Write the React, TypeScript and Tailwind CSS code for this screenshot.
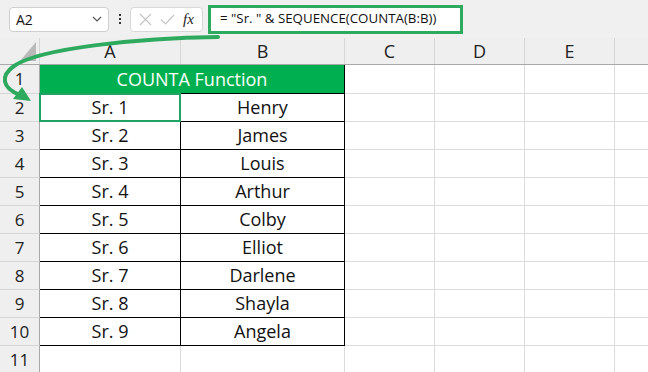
import React from "react";

const cols = [
  { k: "A", w: "w-[141px]" },
  { k: "B", w: "w-[164px]" },
  { k: "C", w: "w-[90px]" },
  { k: "D", w: "w-[90px]" },
  { k: "E", w: "w-[90px]" },
];

const rows = [
  ["Sr. 1", "Henry"],
  ["Sr. 2", "James"],
  ["Sr. 3", "Louis"],
  ["Sr. 4", "Arthur"],
  ["Sr. 5", "Colby"],
  ["Sr. 6", "Elliot"],
  ["Sr. 7", "Darlene"],
  ["Sr. 8", "Shayla"],
  ["Sr. 9", "Angela"],
];

function RowHead({ n }: { n: number }) {
  return (
    <div className="w-[40px] shrink-0 bg-[#efefef] border-r border-r-[#a8a8a8] border-b border-b-[#d6d6d6] flex items-center justify-center text-[17px] text-[#222]">
      {n}
    </div>
  );
}

function Blank({ w }: { w: string }) {
  return <div className={`${w} shrink-0 border-r border-b border-[#dcdcdc]`} />;
}

export default function App() {
  return (
    <div
      className="relative w-[648px] h-[372px] overflow-hidden bg-white text-[#111]"
      style={{ fontFamily: '"Open Sans", "Noto Sans", sans-serif' }}
    >
      {/* formula bar */}
      <div className="h-[38px] bg-[#f0f0f0] flex items-center">
        <div className="ml-[9px] w-[100px] h-[25px] bg-white border border-[#cfcfcf] rounded-[4px] flex items-center justify-between pl-[6px] pr-[6px]">
          <span className="text-[14px] text-[#111]">A2</span>
          <svg width="10" height="6" viewBox="0 0 10 6" fill="none" stroke="#555" strokeWidth="1.2">
            <path d="M1 1l4 4 4-4" />
          </svg>
        </div>
        <div className="w-[21px] flex flex-col items-center gap-[2px]">
          <span className="w-[2px] h-[2px] bg-[#333]" />
          <span className="w-[2px] h-[2px] bg-[#333]" />
          <span className="w-[2px] h-[2px] bg-[#333]" />
        </div>
        <div className="w-[73px] h-[25px] bg-white border border-[#d8d8d8] rounded-[4px] flex items-center pl-[8px] gap-[8px]">
          <svg width="13" height="13" viewBox="0 0 13 13" stroke="#c4c4c4" strokeWidth="1.2">
            <path d="M1 1l11 11M12 1L1 12" />
          </svg>
          <svg width="15" height="11" viewBox="0 0 15 11" fill="none" stroke="#c4c4c4" strokeWidth="1.2">
            <path d="M1 5.5l4.5 4.5L14 1" />
          </svg>
          <span className="text-[15px] italic text-[#222]" style={{ fontFamily: '"Liberation Serif", serif' }}>
            fx
          </span>
        </div>
        <div className="ml-[5px] w-[255px] h-[29px] border-[3px] border-[#2eaa5f] bg-white flex items-center pl-[9px]">
          <span className="text-[13.3px] text-[#111] whitespace-pre">= "Sr. " &amp; SEQUENCE(COUNTA(B:B))</span>
        </div>
      </div>

      {/* column headers */}
      <div className="flex h-[27px] bg-[#efefef] border-b border-[#a8a8a8]">
        <div className="w-[40px] shrink-0 border-r border-[#d6d6d6] relative">
          <svg className="absolute left-[20px] top-[4px]" width="16" height="19" viewBox="0 0 16 19">
            <path d="M16 0V19H0Z" fill="#b9b9b9" />
          </svg>
        </div>
        {cols.map((c) => (
          <div key={c.k} className={`${c.w} shrink-0 border-r border-[#d6d6d6] flex items-center justify-center text-[18px] text-[#222]`}>
            {c.k}
          </div>
        ))}
        <div className="flex-1" />
      </div>

      {/* row 1 */}
      <div className="flex h-[29px]">
        <RowHead n={1} />
        <div className="w-[305px] shrink-0 bg-[#00b050] border-r border-b border-black flex items-center justify-center text-white text-[18px]">
          COUNTA Function
        </div>
        {cols.slice(2).map((c) => (
          <Blank key={c.k} w={c.w} />
        ))}
        <div className="flex-1 border-b border-[#dcdcdc]" />
      </div>

      {rows.map((r, i) => (
        <div key={i} className="flex h-[28px]">
          <RowHead n={i + 2} />
          <div className="relative w-[141px] shrink-0 border-r border-b border-black flex items-center justify-center text-[18px]">
            {r[0]}
            {i === 0 && <div className="absolute -left-[1px] -top-[1px] -right-[1px] -bottom-[1px] border-[2px] border-[#21a366]" />}
          </div>
          <div className="w-[164px] shrink-0 border-r border-b border-black flex items-center justify-center text-[18px]">
            {r[1]}
          </div>
          {cols.slice(2).map((c) => (
            <Blank key={c.k} w={c.w} />
          ))}
          <div className="flex-1 border-b border-[#dcdcdc]" />
        </div>
      ))}

      <div className="flex h-[28px]">
        <RowHead n={11} />
        {cols.map((c) => (
          <Blank key={c.k} w={c.w} />
        ))}
        <div className="flex-1 border-b border-[#dcdcdc]" />
      </div>

      {/* curved arrow */}
      <svg className="absolute left-0 top-0 pointer-events-none" width="648" height="372" viewBox="0 0 648 372">
        <path d="M218 37 C140 38 40 48 14 66 C0 76 2 88 20 95" fill="none" stroke="#2eaa5f" strokeWidth="4" strokeLinecap="round" />
        <path d="M31 101 L13 99 L22 87 Z" fill="#2eaa5f" />
      </svg>
    </div>
  );
}
